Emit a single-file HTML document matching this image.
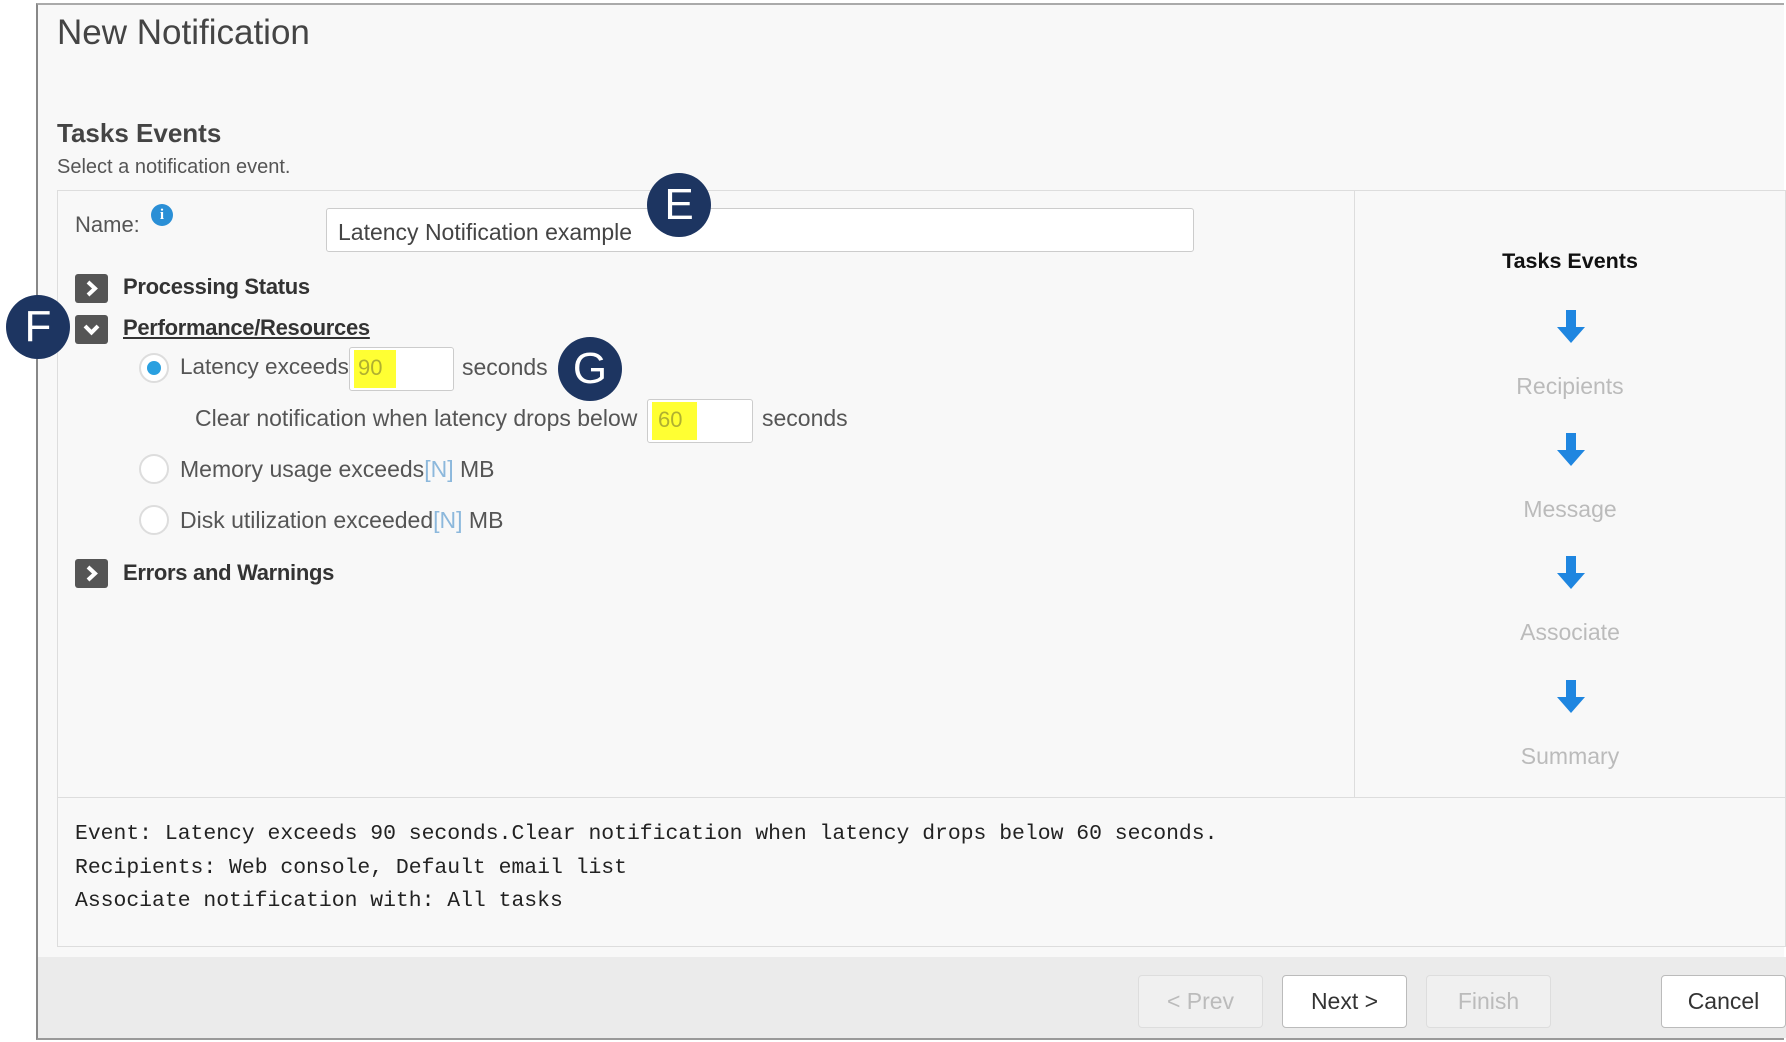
<!DOCTYPE html>
<html><head><meta charset="utf-8"><style>
*{margin:0;padding:0;box-sizing:border-box}
body{width:1786px;height:1042px;background:#fff;position:relative;overflow:hidden;font-family:"Liberation Sans",sans-serif;color:#444}
.a{position:absolute}
.frame{left:36px;top:3px;width:1748px;height:1037px;background:#f8f8f8;border-left:2px solid #888;border-top:2px solid #aaa;border-bottom:2px solid #999}
.t{white-space:nowrap;line-height:1}
.circ{border-radius:50%;background:#1d3561;color:#fff;font-size:44px;display:flex;align-items:center;justify-content:center;width:64px;height:64px}
.ico{width:33px;height:29px;background:#555;border-radius:3px}
.inp{background:#fff;border:1px solid #ccc;border-radius:3px}
.radio{width:30px;height:30px;border-radius:50%;border:2px solid #ddd;background:#fff}
.btn{border:1px solid #bbb;border-radius:4px;background:#fff;font-size:23px;display:flex;align-items:center;justify-content:center;height:53px;width:125px}
.dis{background:#f0f0f0;border-color:#ddd;color:#bbb}
.mono{font-family:"Liberation Mono",monospace;font-size:21.4px;color:#222}
.lab{font-size:23px;color:#bbb;width:200px;text-align:center;left:1470px}
.bh{font-size:22px;color:#333;font-weight:bold;letter-spacing:-.3px}
</style></head><body>
<div class="a frame"></div>
<div class="a t" style="left:57px;top:15px;font-size:35px;color:#444">New Notification</div>
<div class="a t" style="left:57px;top:120px;font-size:26px;font-weight:bold;color:#444">Tasks Events</div>
<div class="a t" style="left:57px;top:157px;font-size:20px;color:#555">Select a notification event.</div>
<!-- panel -->
<div class="a" style="left:57px;top:190px;width:1729px;height:757px;border:1px solid #ddd;background:#f8f8f8"></div>
<div class="a" style="left:1354px;top:190px;width:1px;height:607px;background:#ddd"></div>
<div class="a" style="left:57px;top:797px;width:1729px;height:1px;background:#ddd"></div>
<div class="a" style="left:38px;top:957px;width:1748px;height:81px;background:#ebebeb"></div>

<div class="a t" style="left:75px;top:214px;font-size:22px;color:#555">Name:</div>
<div class="a" style="left:151px;top:204px;width:22px;height:22px;border-radius:50%;background:#2a8fd6;color:#fff;font:bold 15px 'Liberation Serif',serif;text-align:center;line-height:22px">i</div>
<div class="a inp" style="left:326px;top:208px;width:868px;height:44px"></div>
<div class="a t" style="left:338px;top:221px;font-size:23px;color:#444">Latency Notification example</div>
<div class="a circ" style="left:647px;top:173px">E</div>

<div class="a ico" style="left:75px;top:274px"><svg width="33" height="29"><path d="M13 8l7 6.5-7 6.5" stroke="#fff" stroke-width="4" fill="none"/></svg></div>
<div class="a t bh" style="left:123px;top:276px">Processing Status</div>
<div class="a ico" style="left:75px;top:315px"><svg width="33" height="29"><path d="M10 11l6.5 6.5 6.5-6.5" stroke="#fff" stroke-width="4" fill="none"/></svg></div>
<div class="a t bh" style="left:123px;top:317px;text-decoration:underline">Performance/Resources</div>
<div class="a circ" style="left:6px;top:295px">F</div>

<div class="a radio" style="left:139px;top:353px"><div style="width:14px;height:14px;border-radius:50%;background:#2aa0e0;margin:6px"></div></div>
<div class="a t" style="left:180px;top:356px;font-size:22.5px;color:#555">Latency exceeds</div>
<div class="a inp" style="left:349px;top:347px;width:105px;height:44px"></div>
<div class="a" style="left:354px;top:350px;width:42px;height:38px;background:#ffff33"></div>
<div class="a t" style="left:358px;top:357px;font-size:22px;color:#b0b030">90</div>
<div class="a t" style="left:462px;top:356px;font-size:23px;color:#555">seconds</div>
<div class="a circ" style="left:558px;top:337px">G</div>

<div class="a t" style="left:195px;top:407px;font-size:23px;color:#555">Clear notification when latency drops below</div>
<div class="a inp" style="left:647px;top:399px;width:106px;height:44px"></div>
<div class="a" style="left:652px;top:402px;width:45px;height:38px;background:#ffff33"></div>
<div class="a t" style="left:658px;top:409px;font-size:22px;color:#b0b030">60</div>
<div class="a t" style="left:762px;top:407px;font-size:23px;color:#555">seconds</div>

<div class="a radio" style="left:139px;top:454px"></div>
<div class="a t" style="left:180px;top:458px;font-size:23px;color:#555">Memory usage exceeds<span style="color:#8cb8dc">[N]</span> MB</div>
<div class="a radio" style="left:139px;top:505px"></div>
<div class="a t" style="left:180px;top:509px;font-size:23px;color:#555">Disk utilization exceeded<span style="color:#8cb8dc">[N]</span> MB</div>

<div class="a ico" style="left:75px;top:559px"><svg width="33" height="29"><path d="M13 8l7 6.5-7 6.5" stroke="#fff" stroke-width="4" fill="none"/></svg></div>
<div class="a t bh" style="left:123px;top:562px">Errors and Warnings</div>

<!-- right -->
<div class="a t" style="left:1470px;top:251px;width:200px;text-align:center;font-size:21.5px;font-weight:bold;color:#111">Tasks Events</div>
<svg class="a" style="left:1555px;top:310px" width="32" height="34"><path d="M11 0h10v17h9L16 33 2 17h9z" fill="#1f86e0"/></svg>
<div class="a t lab" style="top:375px">Recipients</div>
<svg class="a" style="left:1555px;top:433px" width="32" height="34"><path d="M11 0h10v17h9L16 33 2 17h9z" fill="#1f86e0"/></svg>
<div class="a t lab" style="top:498px">Message</div>
<svg class="a" style="left:1555px;top:556px" width="32" height="34"><path d="M11 0h10v17h9L16 33 2 17h9z" fill="#1f86e0"/></svg>
<div class="a t lab" style="top:621px">Associate</div>
<svg class="a" style="left:1555px;top:680px" width="32" height="34"><path d="M11 0h10v17h9L16 33 2 17h9z" fill="#1f86e0"/></svg>
<div class="a t lab" style="top:745px">Summary</div>

<div class="a t mono" style="left:75px;top:824px">Event: Latency exceeds 90 seconds.Clear notification when latency drops below 60 seconds.</div>
<div class="a t mono" style="left:75px;top:858px">Recipients: Web console, Default email list</div>
<div class="a t mono" style="left:75px;top:891px">Associate notification with: All tasks</div>

<div class="a btn dis" style="left:1138px;top:975px">&lt; Prev</div>
<div class="a btn" style="left:1282px;top:975px;color:#333">Next &gt;</div>
<div class="a btn dis" style="left:1426px;top:975px">Finish</div>
<div class="a btn" style="left:1661px;top:975px;color:#333">Cancel</div>
</body></html>
